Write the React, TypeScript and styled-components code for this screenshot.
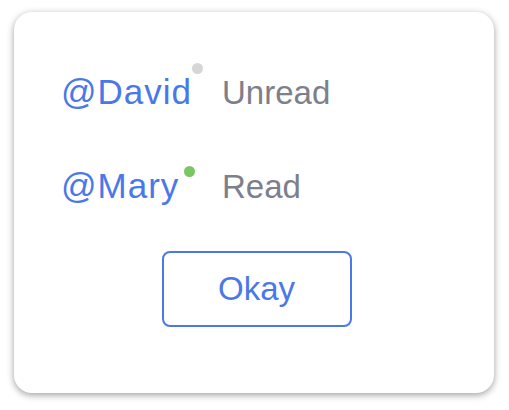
import React from 'react'
import styled, { createGlobalStyle } from 'styled-components';

const GlobalStyle = createGlobalStyle`
  html, body {
    margin: 0;
    padding: 0;
    background: #ffffff;
  }
  body {
    font-family: "Liberation Sans", Arial, sans-serif;
  }
`;

const Page = styled.div`
  width: 509px;
  height: 410px;
  padding: 12px 15px 0 14px;
  box-sizing: border-box;
`;

const Card = styled.div`
  width: 480px;
  height: 381px;
  box-sizing: border-box;
  background: #ffffff;
  border-radius: 18px;
  box-shadow: 0 2px 7px rgba(0, 0, 0, 0.38);
  padding: 60px 0 0 47px;
  display: flex;
  flex-direction: column;
`;

const List = styled.div`
  display: flex;
  flex-direction: column;
  gap: 54px;
`;

const Row = styled.div`
  display: grid;
  grid-template-columns: 161px auto;
  align-items: baseline;
  height: 40px;
`;

const Name = styled.span`
  position: relative;
  justify-self: start;
  font-size: 35px;
  line-height: 40px;
  letter-spacing: 1px;
  color: #4a78e8;
`;

const Dot = styled.span<{ $read: boolean }>`
  position: absolute;
  width: 11px;
  height: 11px;
  border-radius: 50%;
  top: ${p => (p.$read ? '0px' : '-9px')};
  right: ${p => (p.$read ? '-16px' : '-11px')};
  background: ${p => (p.$read ? '#78c760' : '#d6d6d6')};
`;

const Status = styled.span`
  font-size: 33px;
  line-height: 40px;
  color: #7d808a;
`;

const Okay = styled.button`
  align-self: center;
  margin: 45px 0 0 -42px;
  width: 190px;
  height: 76px;
  box-sizing: border-box;
  border: 2px solid #4a78e8;
  border-radius: 8px;
  background: #ffffff;
  color: #4a78e8;
  font-family: "Liberation Sans", Arial, sans-serif;
  font-size: 33px;
  padding: 0;
`;

const people = [
  { name: '@David', read: false },
  { name: '@Mary', read: true },
];

export default function App() {
  return (
    <Page>
      <GlobalStyle />
      <Card>
        <List>
          {people.map(p => (
            <Row key={p.name}>
              <Name>
                {p.name}
                <Dot $read={p.read} />
              </Name>
              <Status>{p.read ? 'Read' : 'Unread'}</Status>
            </Row>
          ))}
        </List>
        <Okay>Okay</Okay>
      </Card>
    </Page>
  )
}
